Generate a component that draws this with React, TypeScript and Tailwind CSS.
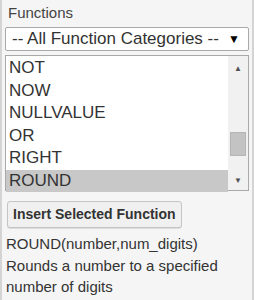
const items = ["NOT", "NOW", "NULLVALUE", "OR", "RIGHT", "ROUND"];

export default function App() {
  return (
    <div
      className="h-[300px] w-[254px] overflow-hidden border-x-2 border-[#d4d4d4] bg-[#f5f5f5] pl-[3px] pr-[3px] text-[#333]"
      style={{ fontFamily: "Arial, 'Liberation Sans', sans-serif" }}
    >
      <div className="pl-[3px] pt-[2px] text-[15px] leading-[22px] text-[#444]">Functions</div>
      <div className="mt-[3px] flex h-[24px] items-center justify-between rounded-[2px] border border-[#a9a9a9] bg-white pl-[6px] pr-[8px] text-[17px] text-[#333]">
        <span>-- All Function Categories --</span>
        <span className="text-[12px] text-black">▼</span>
      </div>
      <div className="mt-[4px] flex h-[136px] border border-[#a9a9a9] bg-white">
        <ul className="flex-1 pt-[1px] text-[17px] leading-[22.5px] text-[#333]">
          {items.map((it) => (
            <li
              key={it}
              className={`pl-[3px] ${it === "ROUND" ? "bg-[#c8c8c8]" : ""}`}
            >
              {it}
            </li>
          ))}
        </ul>
        <div className="flex w-[20px] flex-col items-center bg-[#f1f1f1]">
          <div className="flex h-[20px] w-full items-center justify-center pt-[6px] text-[8px] leading-none text-[#505050]">▲</div>
          <div className="mt-[56px] h-[24px] w-[16px] border border-[#b5b5b5] bg-[#c3c3c3]" />
          <div className="mt-auto flex h-[18px] w-full items-center justify-center text-[8px] leading-none text-[#505050]">▼</div>
        </div>
      </div>
      <button className="ml-[2px] mt-[10px] h-[27px] rounded-[3px] border border-[#c4c4c4] bg-[#f0f0f0] px-[5px] text-[14px] font-bold text-[#333] shadow-[0_1px_0_#ddd]">
        Insert Selected Function
      </button>
      <div className="mt-[5px] pl-[1px] text-[15px] leading-[22px] text-[#333]">ROUND(number,num_digits)</div>
      <div className="pl-[1px] text-[15px] leading-[21px] text-[#333]">
        Rounds a number to a specified
        <br />
        number of digits
      </div>
    </div>
  );
}
